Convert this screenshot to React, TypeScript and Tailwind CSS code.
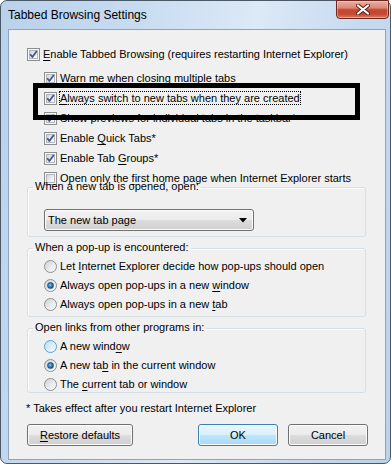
import React from "react";

function Check({ checked = true }: { checked?: boolean }) {
  return (
    <span className="relative w-[13px] h-[13px] shrink-0 border border-[#8e8f8f] bg-[#f6f6f6] flex items-center justify-center">
      <span className="w-[9px] h-[9px] border border-[#b4b9c0] bg-[linear-gradient(135deg,#cfd4da_0%,#eef0f2_60%,#fbfbfb_100%)]" />
      {checked && (
        <svg className="absolute left-0 top-0" width="11" height="11" viewBox="0 0 11 11">
          <path d="M2.2 5.2 L4.4 8 L8.8 2" fill="none" stroke="#42568a" strokeWidth="1.8" strokeLinejoin="round" />
        </svg>
      )}
    </span>
  );
}

function Radio({ checked = false, hover = false }: { checked?: boolean; hover?: boolean }) {
  return (
    <span
      className={
        hover
          ? "w-[13px] h-[13px] shrink-0 rounded-full border border-[#5f9fd0] bg-[linear-gradient(135deg,#b9def5_0%,#e6f4fc_70%,#ffffff_100%)] flex items-center justify-center"
          : "w-[13px] h-[13px] shrink-0 rounded-full border border-[#8e8f8f] bg-[linear-gradient(135deg,#cdd1d6_0%,#eceef0_60%,#fdfdfd_100%)] flex items-center justify-center"
      }
    >
      {checked && (
        <span className="w-[7px] h-[7px] rounded-full bg-[radial-gradient(circle_at_40%_40%,#8ed0f6_0%,#2a7bc0_45%,#124e86_100%)] border border-[#1b4f7e]" />
      )}
    </span>
  );
}

function U({ children }: { children: React.ReactNode }) {
  return <span className="underline underline-offset-[2px] decoration-[1px]">{children}</span>;
}

function Row({ children }: { children: React.ReactNode }) {
  return <div className="h-[20px] flex items-center gap-[3px] whitespace-nowrap">{children}</div>;
}

function RRow({ children }: { children: React.ReactNode }) {
  return <div className="h-[19px] flex items-center gap-[3px] whitespace-nowrap">{children}</div>;
}

function CloseButton() {
  return (
    <div className="-mt-[1px] mr-[1px] w-[53px] h-[19px] rounded-b-[4px] border border-[#6b271d] bg-[linear-gradient(180deg,#eab0a4_0%,#d98a78_40%,#c4462f_52%,#c54a33_78%,#dd7a63_100%)] shadow-[inset_0_0_0_1px_rgba(255,220,210,0.45)] flex items-center justify-center">
      <svg width="14" height="11" viewBox="0 0 14 11">
        <path d="M2 1.5 L12 9.5 M12 1.5 L2 9.5" stroke="#5a1d14" strokeWidth="4" strokeLinecap="round" />
        <path d="M2 1.5 L12 9.5 M12 1.5 L2 9.5" stroke="#ffffff" strokeWidth="2.2" strokeLinecap="round" />
      </svg>
    </div>
  );
}

function Btn({ children, def = false, w }: { children: React.ReactNode; def?: boolean; w: string }) {
  return (
    <div
      className={
        (def
          ? "border-[#3c7fb1] bg-[linear-gradient(180deg,#eaf6fd_0%,#d9f0fc_50%,#bee6fd_50%,#a7d9f5_100%)] "
          : "border-[#707070] bg-[linear-gradient(180deg,#f2f2f2_0%,#ebebeb_50%,#dddddd_50%,#cfcfcf_100%)] ") +
        w +
        " h-[22px] rounded-[3px] border shadow-[inset_0_0_0_1px_#fcfcfc] flex items-center justify-center"
      }
    >
      {children}
    </div>
  );
}

function Group({ label, children, cls }: { label: string; children: React.ReactNode; cls: string }) {
  return (
    <fieldset className={"w-[339px] border border-[#d5dfe5] rounded-[3px] shadow-[inset_1px_1px_0_#ffffff] " + cls}>
      <legend className="ml-[5px] px-[2px] leading-[14px]">
        <span className="relative -top-[1px]">{label}</span>
      </legend>
      {children}
    </fieldset>
  );
}

export default function App() {
  return (
    <div className="relative w-[391px] h-[464px] overflow-hidden bg-white font-['Liberation_Sans',Arial,sans-serif] text-[11px] text-black">
      <div className="w-[391px] h-[464px] rounded-[7px] border border-[#4b5866] bg-[linear-gradient(100deg,#b9d1ea_0%,#c8dcf1_30%,#dce9f6_55%,#c6daef_78%,#bbd2eb_100%)] flex flex-col">
        <div className="h-[28px] flex justify-between items-start">
          <div className="pl-[7px] pt-[6px] leading-[16px] text-[12px]">Tabbed Browsing Settings</div>
          <CloseButton />
        </div>
        <div className="ml-[7px] w-[378px] h-[431px] border border-[#8da3bf] bg-[#f0f0f0] flex flex-col pl-[18px]">
          <div className="mt-[14px]">
            <Row>
              <Check />
              <span>
                <U>E</U>nable Tabbed Browsing (requires restarting Internet Explorer)
              </span>
            </Row>
          </div>
          <div className="ml-[17px] mt-[4px] flex flex-col">
            <Row>
              <Check />
              <span>Warn me when closing multiple tabs</span>
            </Row>
            <Row>
              <Check />
              <span className="border border-dotted border-[#000] leading-[12px] -ml-[1px]">
                <U>A</U>lways switch to new tabs when they are created
              </span>
            </Row>
            <Row>
              <Check />
              <span>Show previews for individual tabs in the taskbar*</span>
            </Row>
            <Row>
              <Check />
              <span>
                Enable <U>Q</U>uick Tabs*
              </span>
            </Row>
            <Row>
              <Check />
              <span>
                Enable Tab <U>G</U>roups*
              </span>
            </Row>
            <Row>
              <Check checked={false} />
              <span>
                Open only the <U>f</U>irst home page when Internet Explorer starts
              </span>
            </Row>
          </div>

          <Group label="When a new tab is opened, open:" cls="-mt-[8px] pb-[5px]">
            <div className="ml-[16px] mt-[15px] w-[210px] h-[22px] rounded-[3px] border border-[#707070] bg-[linear-gradient(180deg,#f2f2f2_0%,#ebebeb_50%,#dddddd_50%,#cfcfcf_100%)] shadow-[inset_0_0_0_1px_#fcfcfc] flex items-center justify-between pl-[3px] pr-[6px]">
              <span>The new tab page</span>
              <svg width="8" height="5" viewBox="0 0 8 5">
                <path d="M0 0 L8 0 L4 4.5 Z" fill="#000" />
              </svg>
            </div>
          </Group>

          <Group label="When a pop-up is encountered:" cls="mt-[4px] pt-[2px] pb-[2px]">
            <div className="ml-[16px] flex flex-col">
              <RRow>
                <Radio />
                <span>
                  Let <U>I</U>nternet Explorer decide how pop-ups should open
                </span>
              </RRow>
              <RRow>
                <Radio checked />
                <span>
                  Always open pop-ups in a new <U>w</U>indow
                </span>
              </RRow>
              <RRow>
                <Radio />
                <span>
                  Always open pop-ups in a new <U>t</U>ab
                </span>
              </RRow>
            </div>
          </Group>

          <Group label="Open links from other programs in:" cls="mt-[4px] pt-[2px]">
            <div className="ml-[16px] flex flex-col -mb-[2px]">
              <RRow>
                <Radio hover />
                <span>
                  A new wind<U>o</U>w
                </span>
              </RRow>
              <RRow>
                <Radio checked />
                <span>
                  A new ta<U>b</U> in the current window
                </span>
              </RRow>
              <RRow>
                <Radio />
                <span>
                  The <U>c</U>urrent tab or window
                </span>
              </RRow>
            </div>
          </Group>

          <div className="mt-[8px] -ml-[1px] h-[14px] leading-[14px]">* Takes effect after you restart Internet Explorer</div>

          <div className="mt-[9px] flex">
            <Btn w="w-[106px]">
              <span>
                <U>R</U>estore defaults
              </span>
            </Btn>
            <div className="ml-[65px]">
              <Btn w="w-[80px]" def>
                OK
              </Btn>
            </div>
            <div className="ml-[10px]">
              <Btn w="w-[80px]">Cancel</Btn>
            </div>
          </div>
        </div>
      </div>
      <div className="absolute left-[33px] top-[83px] w-[327px] h-[37px] border-[5px] border-black" />
    </div>
  );
}
